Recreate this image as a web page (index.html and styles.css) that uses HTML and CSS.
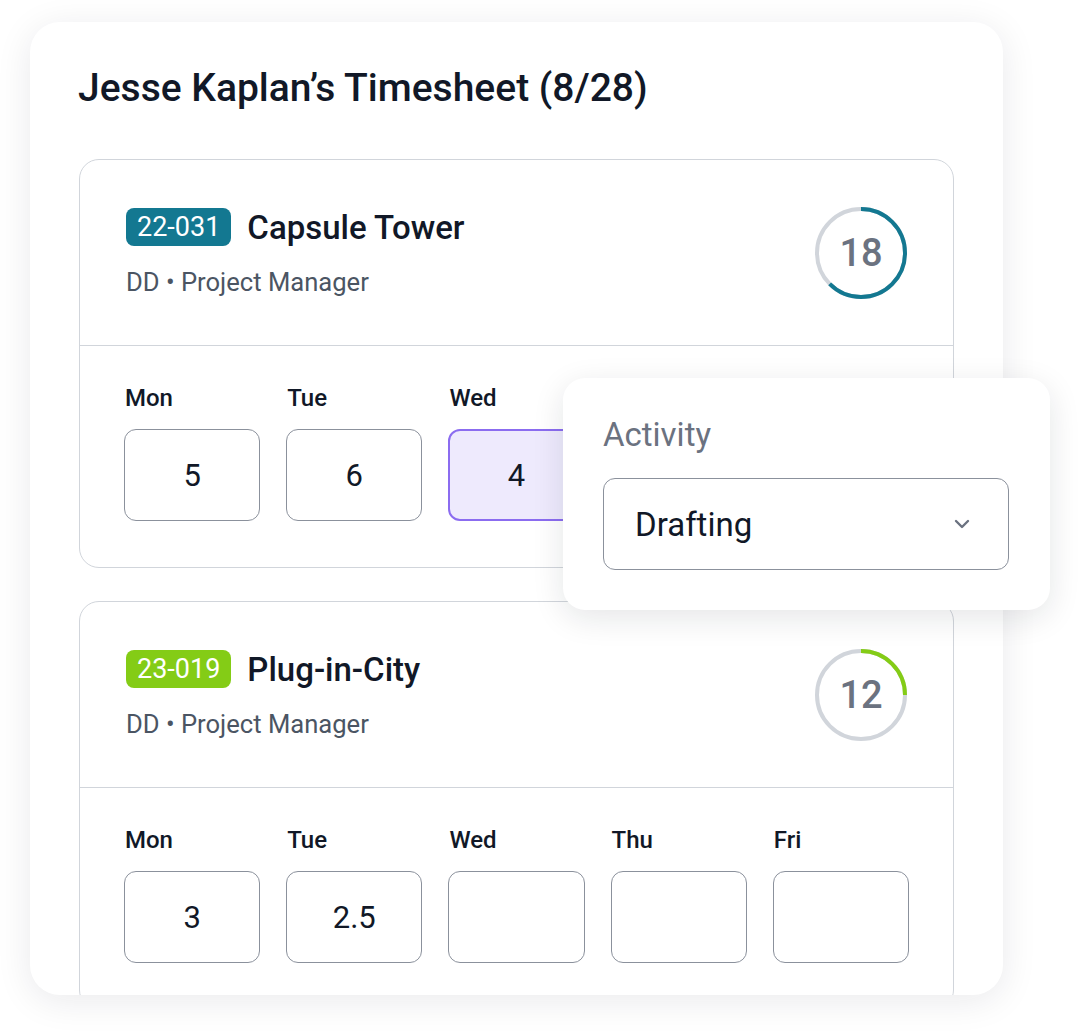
FILE: index.html
```html
<!DOCTYPE html>
<html lang="en">
<head>
<meta charset="utf-8">
<title>Timesheet</title>
<link rel="stylesheet" href="styles.css">
</head>
<body>
<div class="stage">
  <div class="sheet">
    <h1 class="sheet-title">Jesse Kaplan’s Timesheet (8/28)</h1>

    <section class="project">
      <header class="project-head">
        <div class="project-info">
          <div class="project-row">
            <span class="badge badge-teal">22-031</span>
            <span class="project-name">Capsule Tower</span>
          </div>
          <div class="project-sub">DD • Project Manager</div>
        </div>
        <div class="ring">
          <svg class="ring-svg" viewBox="0 0 92 92" width="92" height="92">
            <circle class="ring-track" cx="46" cy="46" r="44"/>
            <circle class="ring-arc ring-arc-teal" cx="46" cy="46" r="44" style="stroke-dasharray: 172.8 276.5"/>
          </svg>
          <span class="ring-num">18</span>
        </div>
      </header>
      <div class="days">
        <div class="day"><div class="day-label">Mon</div><div class="day-box">5</div></div>
        <div class="day"><div class="day-label">Tue</div><div class="day-box">6</div></div>
        <div class="day"><div class="day-label">Wed</div><div class="day-box day-box-active">4</div></div>
        <div class="day"><div class="day-label">Thu</div><div class="day-box"></div></div>
        <div class="day"><div class="day-label">Fri</div><div class="day-box"></div></div>
      </div>
    </section>

    <section class="project">
      <header class="project-head">
        <div class="project-info">
          <div class="project-row">
            <span class="badge badge-green">23-019</span>
            <span class="project-name">Plug-in-City</span>
          </div>
          <div class="project-sub">DD • Project Manager</div>
        </div>
        <div class="ring">
          <svg class="ring-svg" viewBox="0 0 92 92" width="92" height="92">
            <circle class="ring-track" cx="46" cy="46" r="44"/>
            <circle class="ring-arc ring-arc-green" cx="46" cy="46" r="44" style="stroke-dasharray: 69.1 276.5"/>
          </svg>
          <span class="ring-num">12</span>
        </div>
      </header>
      <div class="days">
        <div class="day"><div class="day-label">Mon</div><div class="day-box">3</div></div>
        <div class="day"><div class="day-label">Tue</div><div class="day-box">2.5</div></div>
        <div class="day"><div class="day-label">Wed</div><div class="day-box"></div></div>
        <div class="day"><div class="day-label">Thu</div><div class="day-box"></div></div>
        <div class="day"><div class="day-label">Fri</div><div class="day-box"></div></div>
      </div>
    </section>
  </div>

  <div class="popover">
    <div class="popover-label">Activity</div>
    <div class="select">
      <span class="select-value">Drafting</span>
      <svg class="chevron" viewBox="0 0 16 10" width="16" height="10">
        <path d="M2 2 L8 8 L14 2" fill="none" stroke="#6b7280" stroke-width="2.4" stroke-linecap="round" stroke-linejoin="round"/>
      </svg>
    </div>
  </div>
</div>
</body>
</html>
```

FILE: styles.css
```css
* { box-sizing: border-box; }

html, body {
  margin: 0;
  padding: 0;
  background: #ffffff;
}

body {
  font-family: Roboto, "Liberation Sans", sans-serif;
  color: #111827;
  width: 1080px;
  height: 1033px;
  overflow: hidden;
}

.stage {
  position: relative;
  width: 1080px;
  height: 1033px;
  padding: 22px 0 0 30px;
}

.sheet {
  width: 973px;
  height: 973px;
  background: #ffffff;
  border-radius: 30px;
  box-shadow: 0 6px 36px rgba(17, 24, 39, 0.09);
  overflow: hidden;
  padding: 44px 49px 0 49px;
}

.sheet-title {
  margin: 0 0 49px -1px;
  font-size: 39px;
  line-height: 44px;
  font-weight: 500;
  color: #111827;
  letter-spacing: 0;
}

.project {
  border: 1px solid #d1d5db;
  border-radius: 20px;
  background: #ffffff;
  margin-bottom: 33px;
}

.project-head {
  height: 186px;
  border-bottom: 1px solid #d1d5db;
  display: flex;
  align-items: center;
  justify-content: space-between;
  padding: 0 46px 0 46px;
}

.project-info {
  display: flex;
  flex-direction: column;
  gap: 21px;
}

.project-row {
  display: flex;
  align-items: center;
  gap: 16px;
  height: 38px;
}

.badge {
  display: inline-flex;
  align-items: center;
  justify-content: center;
  height: 38px;
  padding: 0 11px;
  border-radius: 8px;
  color: #ffffff;
  font-size: 27px;
  font-weight: 400;
}

.badge-teal { background: #137891; }
.badge-green { background: #84cc16; }

.project-name {
  font-size: 33px;
  font-weight: 500;
  color: #111827;
}

.project-sub {
  font-size: 25.6px;
  line-height: 30px;
  color: #4b5563;
}

.ring {
  position: relative;
  width: 92px;
  height: 92px;
  display: flex;
  align-items: center;
  justify-content: center;
}

.ring-svg {
  position: absolute;
  inset: 0;
  transform: rotate(-90deg);
}

.ring-track {
  fill: none;
  stroke: #d1d5db;
  stroke-width: 4;
}

.ring-arc {
  fill: none;
  stroke-width: 4;
}

.ring-arc-teal { stroke: #137891; }
.ring-arc-green { stroke: #84cc16; }

.ring-num {
  position: relative;
  font-size: 38px;
  font-weight: 500;
  color: #6b7280;
}

.days {
  display: grid;
  grid-template-columns: repeat(5, 1fr);
  column-gap: 26px;
  padding: 37px 44px 46px 44px;
}

.day-label {
  font-size: 24px;
  line-height: 30px;
  font-weight: 500;
  color: #111827;
  padding-left: 1px;
  margin-bottom: 16px;
}

.day-box {
  height: 92px;
  border: 1.5px solid #8b919c;
  border-radius: 12px;
  display: flex;
  align-items: center;
  justify-content: center;
  font-size: 31px;
  color: #111827;
}

.day-box-active {
  border: 2px solid #8b6cf0;
  background: #eeeafd;
}

.popover {
  position: absolute;
  left: 563px;
  top: 378px;
  width: 487px;
  height: 232px;
  background: #ffffff;
  border-radius: 22px;
  box-shadow: 0 8px 32px rgba(17, 24, 39, 0.11);
  padding: 39px 41px 40px 40px;
}

.popover-label {
  font-size: 33px;
  line-height: 36px;
  color: #6b7280;
  margin-bottom: 25px;
}

.select {
  height: 92px;
  border: 1.5px solid #8b919c;
  border-radius: 12px;
  display: flex;
  align-items: center;
  justify-content: space-between;
  padding: 0 38px 0 31px;
}

.select-value {
  font-size: 33px;
  color: #111827;
}

.chevron {
  display: block;
}
```
